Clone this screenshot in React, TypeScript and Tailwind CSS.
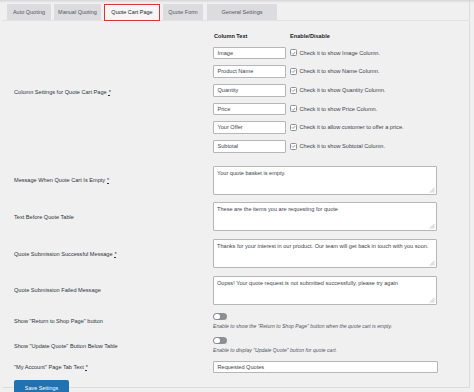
import React from 'react';

const tabs = ['Auto Quoting', 'Manual Quoting', 'Quote Cart Page', 'Quote Form', 'General Settings'];

const columns = [
  { value: 'Image', label: 'Check it to show Image Column.' },
  { value: 'Product Name', label: 'Check it to show Name Column.' },
  { value: 'Quantity', label: 'Check it to show Quantity Column.' },
  { value: 'Price', label: 'Check it to show Price Column.' },
  { value: 'Your Offer', label: 'Check it to allow customer to offer a price.' },
  { value: 'Subtotal', label: 'Check it to show Subtotal Column.' },
];

const messages = [
  { label: 'Message When Quote Cart Is Empty', required: true, value: 'Your quote basket is empty.' },
  { label: 'Text Before Quote Table', required: false, value: 'These are the items you are requesting for quote' },
  {
    label: 'Quote Submission Successful Message',
    required: true,
    value: 'Thanks for your interest in our product. Our team will get back in touch with you soon.',
  },
  {
    label: 'Quote Submission Failed Message',
    required: false,
    value: 'Oopss! Your quote request is not submitted successfully, please try again',
  },
];

function Required() {
  return <span className="ml-[2px] underline decoration-dotted">*</span>;
}

function Checkbox() {
  return (
    <span className="flex h-[7px] w-[7px] items-center justify-center rounded-[1.5px] border-[0.6px] border-[#8c8f94] bg-white">
      <svg viewBox="0 0 10 10" className="h-[6.5px] w-[6.5px]">
        <path d="M2 5.2 L4.2 7.4 L8.2 2.6" fill="none" stroke="#2271b1" strokeWidth="1.3" />
      </svg>
    </span>
  );
}

function Grip() {
  return (
    <svg viewBox="0 0 8 8" className="absolute bottom-[1px] right-[1px] h-[6px] w-[6px]">
      <path d="M7.5 1 L1 7.5 M7.5 3.5 L3.5 7.5 M7.5 6 L6 7.5" stroke="#8c8f94" strokeWidth="0.7" />
    </svg>
  );
}

function Toggle() {
  return (
    <span className="flex h-[7.5px] w-[14px] items-center rounded-full bg-[#8c8f94] px-[1px]">
      <span className="h-[5.5px] w-[5.5px] rounded-full bg-white" />
    </span>
  );
}

export default function App() {
  return (
    <div className="relative h-[392px] w-[474px] overflow-hidden bg-[#f0f0f1] font-['Liberation_Sans',Arial,sans-serif] text-[#2c3338]">
      <div className="absolute left-0 right-0 top-0 h-[3px] bg-gradient-to-b from-[#d6d6d8] to-transparent" />
      <div className="ml-[2px] h-[388px] w-[468px] border-b border-r border-[#dcdcde]">
        {/* Tabs */}
        <div className="flex h-[21px] items-end gap-[3px] border-b border-[#e2e2e4] px-[5px]">
          {tabs.map((tab) =>
            tab === 'Quote Cart Page' ? (
              <div
                key={tab}
                className="mb-[-1px] flex h-[17px] w-[56px] items-center justify-center border-[1.5px] border-[#d63638] bg-[#f6f6f7] text-[5.5px] text-[#1d2327]"
              >
                {tab}
              </div>
            ) : (
              <div
                key={tab}
                className={`flex h-[16px] items-center justify-center bg-[#dcdcde] text-[5.5px] text-[#50575e] ${
                  tab === 'Auto Quoting'
                    ? 'w-[44px]'
                    : tab === 'Manual Quoting'
                    ? 'w-[47px]'
                    : tab === 'Quote Form'
                    ? 'w-[40px]'
                    : 'ml-[1px] w-[70px]'
                }`}
              >
                {tab}
              </div>
            )
          )}
        </div>

        <div className="flex flex-col pl-[12px] text-[5.6px]">
          {/* Column settings */}
          <div className="mt-[11.5px] flex items-center">
            <div className="w-[199px]">
              Column Settings for Quote Cart Page
              <Required />
            </div>
            <div className="flex flex-col">
              <div className="flex h-[8px] items-center font-bold text-[#1d2327]">
                <span className="w-[77px] pl-[1px]">Column Text</span>
                <span>Enable/Disable</span>
              </div>
              <div className="mt-[6px] flex flex-col gap-[6px]">
                {columns.map((c) => (
                  <div key={c.value} className="flex items-center">
                    <div className="flex h-[12.7px] w-[73px] items-center rounded-[1px] border-[0.7px] border-[#b4b6ba] bg-white pl-[3.5px] text-[#3c434a]">
                      {c.value}
                    </div>
                    <span className="ml-[4px] mr-[2.5px]">
                      <Checkbox />
                    </span>
                    <span className="text-[#3c434a]">{c.label}</span>
                  </div>
                ))}
              </div>
            </div>
          </div>

          {/* Messages */}
          <div className="mt-[13px] flex flex-col gap-[7.8px]">
            {messages.map((m) => (
              <div key={m.label} className="flex items-center">
                <div className="w-[199px]">
                  {m.label}
                  {m.required && <Required />}
                </div>
                <div className="relative h-[29px] w-[224px] rounded-[1px] border-[0.7px] border-[#b4b6ba] bg-white px-[3px] pt-[2px] text-[#3c434a]">
                  {m.value}
                  <Grip />
                </div>
              </div>
            ))}
          </div>

          {/* Toggles */}
          <div className="mt-[7.5px] flex items-center">
            <div className="w-[199px]">Show "Return to Shop Page" button</div>
            <div className="flex flex-col">
              <Toggle />
              <span className="mt-[3px] text-[5.1px] italic text-[#50575e]">
                Enable to show the "Return to Shop Page" button when the quote cart is empty.
              </span>
            </div>
          </div>
          <div className="mt-[6px] flex items-center">
            <div className="w-[199px]">Show "Update Quote" Button Below Table</div>
            <div className="flex flex-col">
              <Toggle />
              <span className="mt-[3px] text-[5.1px] italic text-[#50575e]">
                Enable to display "Update Quote" button for quote cart.
              </span>
            </div>
          </div>

          {/* My account */}
          <div className="mt-[6px] flex items-center">
            <div className="w-[199px]">
              "My Account" Page Tab Text
              <Required />
            </div>
            <div className="flex h-[12.5px] w-[225px] items-center rounded-[1px] border-[0.7px] border-[#b4b6ba] bg-white pl-[3.5px] text-[#3c434a]">
              Requested Quotes
            </div>
          </div>

          <button className="mt-[7px] flex h-[15px] w-[55px] items-center justify-center rounded-[2px] bg-[#2271b1] text-[5.4px] text-white">
            Save Settings
          </button>
        </div>
      </div>
    </div>
  );
}
